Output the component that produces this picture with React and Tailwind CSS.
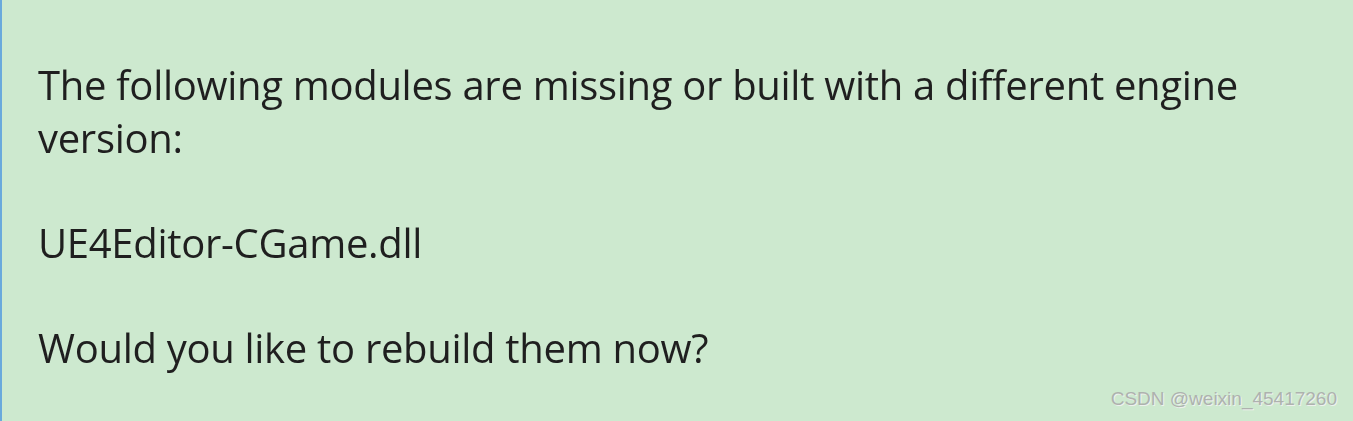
export default function App() {
  return (
    <div className="relative h-[421px] w-full overflow-hidden border-l-2 border-[#6aaadc] bg-[#cde9cf]">
      <div className="flex flex-col pl-[36px] pt-[59px] font-['Open_Sans','Noto_Sans',sans-serif] text-[40px] leading-[52.5px] tracking-[-0.3px] text-[#1f1f1f] blur-[0.5px]">
        <p>The following modules are missing or built with a different engine</p>
        <p>version:</p>
        <p className="h-[52.5px]" />
        <p>UE4Editor-CGame.dll</p>
        <p className="h-[52.5px]" />
        <p>Would you like to rebuild them now?</p>
      </div>
      <span className="absolute bottom-[8px] right-[16px] font-['Liberation_Sans',Arial,sans-serif] text-[19px] text-[#aeb2ae] [text-shadow:1px_1px_0_#eef1ee]">
        CSDN @weixin_45417260
      </span>
    </div>
  );
}
